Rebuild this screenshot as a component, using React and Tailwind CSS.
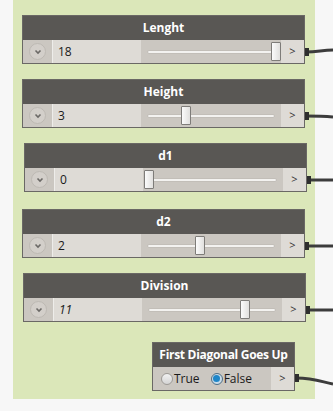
const sliders = [
  { name: 'Lenght', value: '18', pos: 1, ml: 'ml-[9px]', mt: 'mt-[15px]' },
  { name: 'Height', value: '3', pos: 0.3, ml: 'ml-[9px]', mt: 'mt-[15px]' },
  { name: 'd1', value: '0', pos: 0, ml: 'ml-[11px]', mt: 'mt-[15px]' },
  { name: 'd2', value: '2', pos: 0.41, ml: 'ml-[9px]', mt: 'mt-[17px]' },
  { name: 'Division', value: '11', pos: 0.75, ml: 'ml-[10px]', mt: 'mt-[15px]', italic: true },
];

const font = { fontFamily: '"Open Sans", "Liberation Sans", sans-serif' };

function Chevron() {
  return (
    <div className="flex h-[17px] w-[17px] items-center justify-center rounded-full border border-[#bdb9b3] bg-[#d3cfca]">
      <svg width="8" height="6" viewBox="0 0 8 6">
        <path d="M1.5 1.5 L4 4 L6.5 1.5" fill="none" stroke="#6b6966" strokeWidth="1.6" />
      </svg>
    </div>
  );
}

function SliderNode({ name, value, pos, ml, mt, italic }) {
  return (
    <div className={`${ml} ${mt} w-[283px] border border-[#6a6865] bg-[#595754]`}>
      <div className="flex h-[24px] items-center justify-center text-[12px] font-bold text-white">{name}</div>
      <div className="flex h-[23px] bg-[#cbc7c1]">
        <div className="flex w-[29px] items-center justify-center">
          <Chevron />
        </div>
        <div className="flex w-[89px] items-center border-l border-[#eeedea] bg-[#dedbd6] pl-[5px] text-[12px] text-[#1a1a1a]">
          <span className={italic ? 'italic' : ''}>{value}</span>
        </div>
        <div className="relative flex w-[140px] items-center px-[6px]">
          <div className="h-[4px] w-full rounded-full border border-[#c2beb8] bg-[#f3f2f0]" />
          <div
            className="absolute top-[2px] h-[19px] w-[10px] rounded-[1px] border border-[#7e7c79] bg-gradient-to-r from-[#fbfbfb] to-[#e1e0de]"
            style={{ left: `${1 + pos * 129}px` }}
          />
        </div>
        <div className="flex flex-1 items-center justify-center bg-[#dedbd6] text-[11px] text-[#333]">&gt;</div>
      </div>
    </div>
  );
}

function Radio({ checked, label }) {
  return (
    <div className="flex items-center">
      <div
        className={`flex h-[12px] w-[12px] items-center justify-center rounded-full border ${
          checked ? 'border-[#4f6f86] bg-[#c9dbe8]' : 'border-[#9d9a96] bg-gradient-to-b from-[#f2f2f2] to-[#d4d4d4]'
        }`}
      >
        {checked && <div className="h-[7px] w-[7px] rounded-full bg-[#1f86c8]" />}
      </div>
      <span className="ml-[1px] text-[12px] text-[#1a1a1a]">{label}</span>
    </div>
  );
}

export default function App() {
  return (
    <div className="relative h-[411px] w-[333px] overflow-hidden bg-[#f7f7f7]" style={font}>
      <div className="ml-[13px] flex h-[399px] w-[302px] flex-col bg-[#dbe7b9]">
        {sliders.map((s) => (
          <SliderNode key={s.name} {...s} />
        ))}
        <div className="ml-[139px] mt-[20px] w-[143px] border border-[#6a6865] bg-[#595754]">
          <div className="flex h-[24px] items-center justify-center text-[12px] font-bold tracking-[-0.3px] text-white">First Diagonal Goes Up</div>
          <div className="flex h-[23px] bg-[#cbc7c1]">
            <div className="flex flex-1 items-center gap-[11px] pl-[8px]">
              <Radio label="True" />
              <Radio checked label="False" />
            </div>
            <div className="flex w-[23px] items-center justify-center bg-[#dedbd6] text-[11px] text-[#333]">&gt;</div>
          </div>
        </div>
      </div>
      <svg className="pointer-events-none absolute left-0 top-0" width="333" height="411">
        <g fill="none" stroke="#3c3c3c" strokeWidth="3">
          <path d="M306 52 C318 52 322 50 333 50" />
          <path d="M306 116 C318 116 322 116 333 117" />
          <path d="M308 180 C318 180 322 180 333 180" />
          <path d="M306 246 C318 246 322 246 333 246" />
          <path d="M307 310 C318 310 322 310 333 310" />
          <path d="M296 378 C315 378 322 382 333 384" />
        </g>
        <g fill="#2e2e2e">
          <rect x="305" y="48" width="4" height="8" />
          <rect x="305" y="112" width="4" height="8" />
          <rect x="307" y="176" width="4" height="8" />
          <rect x="305" y="242" width="4" height="8" />
          <rect x="306" y="306" width="4" height="8" />
          <rect x="295" y="374" width="4" height="8" />
        </g>
      </svg>
    </div>
  );
}
